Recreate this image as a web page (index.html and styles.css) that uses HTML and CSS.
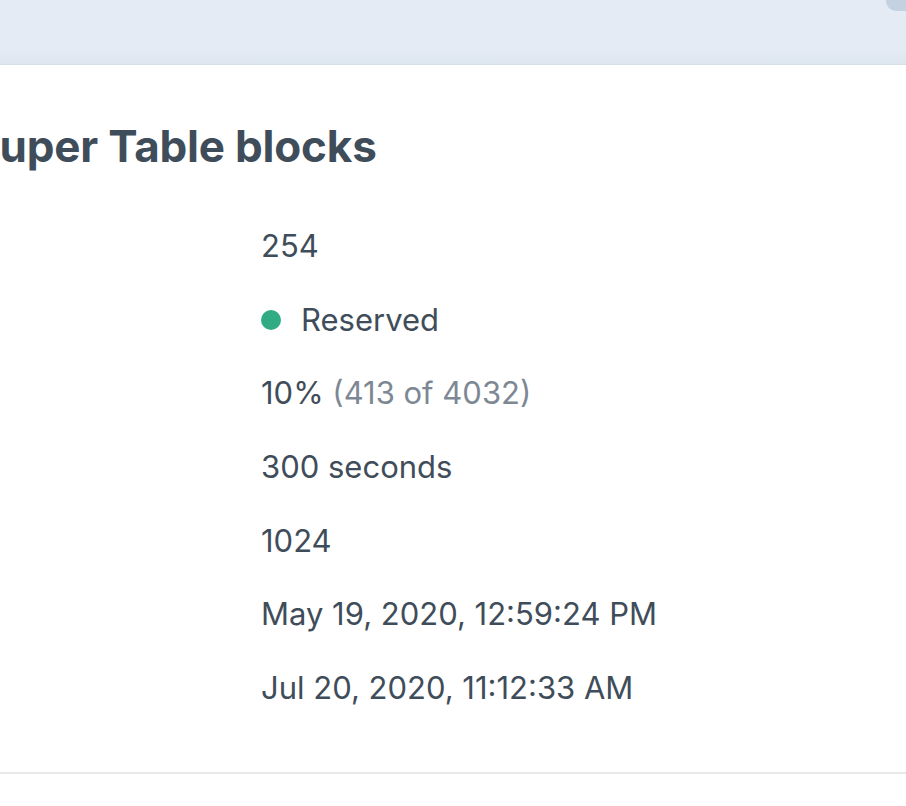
FILE: index.html
```html
<!DOCTYPE html>
<html lang="en">
<head>
<meta charset="utf-8">
<title>Super Table blocks</title>
<link rel="stylesheet" href="styles.css">
</head>
<body>
<header class="topbar">
  <span class="topbar-tab"></span>
</header>
<main class="content">
  <h1 class="title">Super Table blocks</h1>
  <dl class="details">
    <div class="row"><dt>ID</dt><dd>254</dd></div>
    <div class="row"><dt>Status</dt><dd><span class="dot"></span>Reserved</dd></div>
    <div class="row"><dt>Progress</dt><dd>10% <span class="light">(413 of 4032)</span></dd></div>
    <div class="row"><dt>Time to reserve</dt><dd>300 seconds</dd></div>
    <div class="row"><dt>Priority</dt><dd>1024</dd></div>
    <div class="row"><dt>Date pushed</dt><dd>May 19, 2020, 12:59:24 PM</dd></div>
    <div class="row"><dt>Date reserved</dt><dd>Jul 20, 2020, 11:12:33 AM</dd></div>
  </dl>
  <hr class="divider">
</main>
</body>
</html>
```
FILE: styles.css
```css
html, body {
  margin: 0;
  padding: 0;
  background: #ffffff;
  overflow: hidden;
}
body {
  font-family: Inter, "Noto Sans", "Liberation Sans", sans-serif;
  color: #3f4d5a;
}
.topbar {
  position: relative;
  height: 65px;
  box-sizing: border-box;
  background: linear-gradient(to bottom, #e4ebf4 0, #e4ebf4 48px, #dde5ef 65px);
  border-bottom: 1px solid #d7dfe9;
}
.topbar-tab {
  position: absolute;
  top: 0;
  right: 0;
  width: 20px;
  height: 11px;
  background: #c4d1e1;
  border-bottom-left-radius: 10px;
}
.content {
  margin-left: -29px;
  padding-top: 55px;
}
.title {
  margin: 0 0 51px 0;
  font-size: 44px;
  font-weight: 700;
  line-height: 53px;
  letter-spacing: -0.2px;
  color: #3f4d5a;
}
.details {
  margin: 0;
}
.row {
  display: grid;
  grid-template-columns: 290px 1fr;
  height: 73.7px;
  align-items: start;
}
.row dt {
  visibility: hidden;
}
.row dd {
  margin: 0;
  font-size: 31px;
  line-height: 44px;
  white-space: nowrap;
}
.dot {
  display: inline-block;
  width: 20px;
  height: 20px;
  border-radius: 50%;
  background: #31ab83;
  margin-right: 20px;
  margin-bottom: 4px;
  vertical-align: middle;
}
.light {
  color: #7d8894;
}
.divider {
  margin: 32px 0 0 0;
  border: 0;
  height: 2px;
  background: #e8e8e8;
  width: 960px;
}
```
